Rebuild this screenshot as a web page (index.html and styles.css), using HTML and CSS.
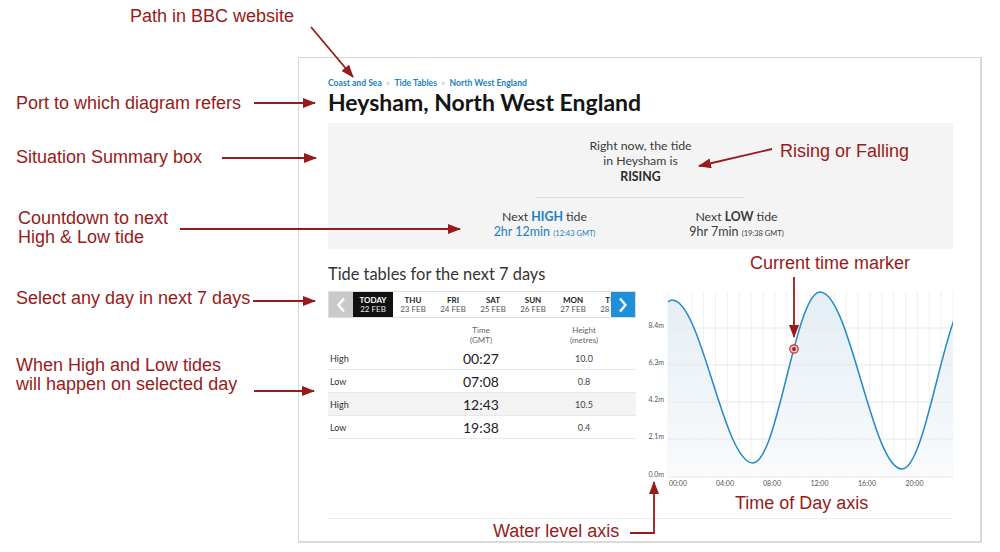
FILE: index.html
```html
<!DOCTYPE html>
<html>
<head>
<meta charset="utf-8">
<title>Heysham tide tables</title>
<link rel="stylesheet" href="styles.css">
</head>
<body>
<div class="page">
  <div class="frame">
    <nav class="crumbs">
      <a>Coast and Sea</a><span class="sep">&gt;</span><a>Tide Tables</a><span class="sep">&gt;</span><a>North West England</a>
    </nav>
    <h1 class="title">Heysham, North West England</h1>

    <section class="summary">
      <div>Right now, the tide</div>
      <div>in Heysham is</div>
      <div class="status">RISING</div>
      <div class="divider"></div>
      <div class="next">
        <div class="next-col">
          <div>Next <b class="blue">HIGH</b> tide</div>
          <div class="count blue">2hr 12min <small>(12:43 GMT)</small></div>
        </div>
        <div class="next-col">
          <div>Next <b>LOW</b> tide</div>
          <div class="count">9hr 7min <small>(19:38 GMT)</small></div>
        </div>
      </div>
    </section>

    <h2 class="section-title">Tide tables for the next 7 days</h2>

    <div class="cols">
      <div class="left">
        <div class="days">
          <div class="nav prev"><svg width="10" height="16" viewBox="0 0 10 16"><polyline points="8,1.5 2.5,8 8,14.5" fill="none" stroke="#fff" stroke-width="2.4"/></svg></div>
          <div class="strip">
            <div class="day today"><b>TODAY</b>22 FEB</div>
            <div class="day"><b>THU</b>23 FEB</div>
            <div class="day"><b>FRI</b>24 FEB</div>
            <div class="day"><b>SAT</b>25 FEB</div>
            <div class="day"><b>SUN</b>26 FEB</div>
            <div class="day"><b>MON</b>27 FEB</div>
            <div class="day"><b>TUE</b>28 FEB</div>
          </div>
          <div class="nav next-btn"><svg width="10" height="16" viewBox="0 0 10 16"><polyline points="2,1.5 7.5,8 2,14.5" fill="none" stroke="#fff" stroke-width="2.4"/></svg></div>
        </div>

        <div class="thead">
          <div></div>
          <div>Time<br>(GMT)</div>
          <div>Height<br>(metres)</div>
        </div>
        <div class="row"><div class="type">High</div><div class="time">00:27</div><div class="ht">10.0</div></div>
        <div class="row"><div class="type">Low</div><div class="time">07:08</div><div class="ht">0.8</div></div>
        <div class="row shade"><div class="type">High</div><div class="time">12:43</div><div class="ht">10.5</div></div>
        <div class="row"><div class="type">Low</div><div class="time">19:38</div><div class="ht">0.4</div></div>
      </div>

      <svg class="chart" width="313" height="200" viewBox="640 291 313 200">
        <defs>
          <linearGradient id="fillg" x1="0" y1="0" x2="0" y2="1">
            <stop offset="0" stop-color="#e2ecf5"/>
            <stop offset="1" stop-color="#f8fafc"/>
          </linearGradient>
          <clipPath id="plot"><rect x="668" y="285" width="285" height="192"/></clipPath>
        </defs>
        <path d="M668 292V477M679.875 292V477M691.75 292V477M703.625 292V477M715.5 292V477M727.375 292V477M739.25 292V477M751.125 292V477M763 292V477M774.875 292V477M786.75 292V477M798.625 292V477M810.5 292V477M822.375 292V477M834.25 292V477M846.125 292V477M858 292V477M869.875 292V477M881.75 292V477M893.625 292V477M905.5 292V477M917.375 292V477M929.25 292V477M941.125 292V477M953 292V477" stroke="#efefef" stroke-width="1" fill="none"/>
        <g clip-path="url(#plot)">
          <path d="M668,302 C669.5,300.5 670.5,300 672,300 C701.5,300 723.5,463 753,463 C777.4,463 795.6,292 820,292 C849.9,292 872.1,469 902,469 C927.1,469 945.9,295 971,295 L971,477 L668,477 Z" fill="url(#fillg)" fill-opacity="0.9"/>
        </g>
        <path d="M668 328H953M668 365H953M668 402H953M668 439H953M668 477H953" stroke="#e8e8e8" stroke-width="1" fill="none"/>
        <g clip-path="url(#plot)">
          <path d="M668,302 C669.5,300.5 670.5,300 672,300 C701.5,300 723.5,463 753,463 C777.4,463 795.6,292 820,292 C849.9,292 872.1,469 902,469 C927.1,469 945.9,295 971,295" fill="none" stroke="#2489c4" stroke-width="1.5"/>
        </g>
        <circle cx="794" cy="349" r="4.2" fill="#f2c4c4" stroke="#c0392b" stroke-width="1.2"/>
        <circle cx="794" cy="349" r="1.9" fill="#a81c1c"/>
        <g class="axis-y" text-anchor="end">
          <text x="664" y="327.5">8.4m</text>
          <text x="664" y="364.5">6.3m</text>
          <text x="664" y="401.5">4.2m</text>
          <text x="664" y="438.5">2.1m</text>
          <text x="664" y="476.5">0.0m</text>
        </g>
        <g class="axis-x">
          <text x="669" y="486">00:00</text>
          <text x="716" y="486">04:00</text>
          <text x="763" y="486">08:00</text>
          <text x="810.5" y="486">12:00</text>
          <text x="858" y="486">16:00</text>
          <text x="905.5" y="486">20:00</text>
        </g>
      </svg>
    </div>
    <div class="foot-line"></div>
  </div>

  <svg class="annotations" width="1000" height="552" viewBox="0 0 1000 552">
    <defs>
      <marker id="ah" markerWidth="13" markerHeight="10" refX="12" refY="5" orient="auto" markerUnits="userSpaceOnUse">
        <path d="M0,0 L13,5 L0,10 z" fill="#981a1a"/>
      </marker>
    </defs>
    <g stroke="#981a1a" stroke-width="1.8" fill="none">
      <line x1="311" y1="27" x2="353" y2="77" marker-end="url(#ah)"/>
      <line x1="254" y1="103" x2="315" y2="103" marker-end="url(#ah)"/>
      <line x1="222" y1="158" x2="316" y2="158" marker-end="url(#ah)"/>
      <line x1="772" y1="149" x2="699" y2="166" marker-end="url(#ah)"/>
      <line x1="180" y1="229" x2="460" y2="229" marker-end="url(#ah)"/>
      <line x1="253" y1="301" x2="315" y2="301" marker-end="url(#ah)"/>
      <line x1="254" y1="391" x2="314" y2="391" marker-end="url(#ah)"/>
      <line x1="794" y1="277" x2="794" y2="337" marker-end="url(#ah)"/>
      <polyline points="630,533 654,533 654,482" marker-end="url(#ah)"/>
    </g>
    <g class="note">
      <text x="130" y="22">Path in BBC website</text>
      <text x="16" y="109">Port to which diagram refers</text>
      <text x="16" y="163">Situation Summary box</text>
      <text x="780" y="157">Rising or Falling</text>
      <text x="18" y="224">Countdown to next</text>
      <text x="18" y="243">High &amp; Low tide</text>
      <text x="16" y="304">Select any day in next 7 days</text>
      <text x="16" y="371">When High and Low tides</text>
      <text x="16" y="390">will happen on selected day</text>
      <text x="750" y="269">Current time marker</text>
      <text x="735" y="509">Time of Day axis</text>
      <text x="493" y="537">Water level axis</text>
    </g>
  </svg>
</div>
</body>
</html>
```

FILE: styles.css
```css
html, body {
  margin: 0;
  padding: 0;
  background: #fff;
}

.page {
  position: relative;
  width: 1000px;
  height: 552px;
  overflow: hidden;
  box-sizing: border-box;
  padding: 57px 0 0 298px;
  font-family: Lato, "Noto Sans", sans-serif;
  color: #222;
}

.frame {
  width: 684px;
  height: 486px;
  box-sizing: border-box;
  border: 1px solid #d8d8d8;
  border-right: 2px solid #dadada;
  border-bottom: 2px solid #dadada;
  padding: 19px 27px 0 29px;
}

.crumbs {
  font-size: 8.6px;
  line-height: 12px;
  font-weight: 700;
  color: #1a7fbd;
}

.crumbs .sep {
  color: #9a9a9a;
  font-weight: 400;
  margin: 0 4px;
  font-size: 8px;
}

.title {
  margin: 0;
  font-size: 23px;
  line-height: 26px;
  font-weight: 700;
  color: #141414;
}

.summary {
  margin-top: 8px;
  height: 126px;
  box-sizing: border-box;
  background: #f4f4f4;
  padding-top: 15px;
  text-align: center;
  font-size: 12.3px;
  line-height: 15px;
  color: #3a3a3a;
}

.status {
  font-weight: 700;
  margin-top: 1px;
  color: #2a2a2a;
}

.divider {
  width: 209px;
  height: 1px;
  background: #dcdcdc;
  margin: 13px auto 0;
}

.next {
  display: flex;
  justify-content: center;
  margin-top: 11px;
}

.next-col {
  width: 192px;
}

.count {
  font-size: 12.5px;
}

.count small {
  font-size: 7.5px;
}

.blue {
  color: #1a80c2;
}

.section-title {
  margin: 15px 0 0;
  font-size: 16.4px;
  line-height: 20px;
  font-weight: 400;
  color: #333;
}

.cols {
  display: flex;
  gap: 4px;
  margin-top: 7px;
  height: 200px;
}

.left {
  width: 308px;
  flex: none;
}

.days {
  display: flex;
  height: 27px;
  box-sizing: border-box;
  border: 1px solid #dddddd;
}

.nav {
  flex: 0 0 24px;
  display: flex;
  align-items: center;
  justify-content: center;
}

.prev {
  background: #c9c9c9;
}

.next-btn {
  background: #1e90d9;
}

.strip {
  flex: 1;
  display: flex;
  overflow: hidden;
}

.day {
  flex: 0 0 40px;
  text-align: center;
  font-size: 8px;
  line-height: 9px;
  padding-top: 4px;
  color: #555;
  box-sizing: border-box;
}

.day b {
  display: block;
  font-weight: 700;
  color: #222;
}

.today {
  position: relative;
  background: #111;
  color: #e8e8e8;
}

.today b {
  color: #fff;
}

.today::after {
  content: "";
  position: absolute;
  left: 50%;
  bottom: -4px;
  margin-left: -3px;
  border-left: 3px solid transparent;
  border-right: 3px solid transparent;
  border-top: 4px solid #111;
}

.thead {
  display: grid;
  grid-template-columns: 102px 102px 104px;
  font-size: 8px;
  line-height: 10px;
  color: #666;
  padding: 7px 0 2px;
  text-align: center;
}

.row {
  display: grid;
  grid-template-columns: 102px 102px 104px;
  height: 23px;
  box-sizing: border-box;
  align-items: center;
  border-bottom: 1px solid #e8e8e8;
}

.row.shade {
  background: #f3f3f3;
}

.type {
  padding-left: 2px;
  font-size: 9px;
  color: #333;
}

.time {
  text-align: center;
  font-size: 14px;
  color: #222;
}

.ht {
  text-align: center;
  font-size: 9px;
  color: #444;
}

.chart {
  display: block;
  flex: none;
}

.chart text {
  font-family: Lato, "Noto Sans", sans-serif;
  font-size: 7px;
  fill: #555;
}

.foot-line {
  margin-top: 27px;
  border-top: 1px solid #ececec;
}

.annotations {
  position: absolute;
  left: 0;
  top: 0;
  pointer-events: none;
}

.note text {
  font-family: "Liberation Sans", Arial, sans-serif;
  font-size: 18px;
  fill: #981a1a;
}
```
